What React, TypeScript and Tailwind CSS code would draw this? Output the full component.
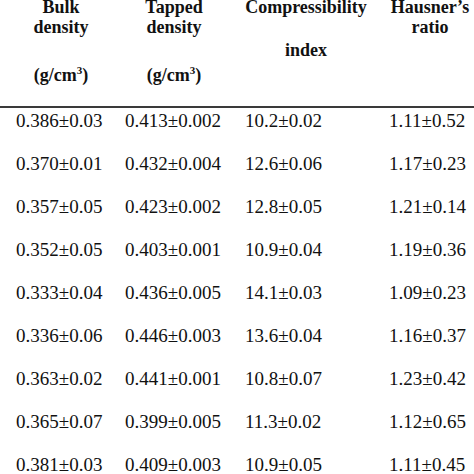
const rows: [string, string, string, string][] = [
  ['0.386±0.03', '0.413±0.002', '10.2±0.02', '1.11±0.52'],
  ['0.370±0.01', '0.432±0.004', '12.6±0.06', '1.17±0.23'],
  ['0.357±0.05', '0.423±0.002', '12.8±0.05', '1.21±0.14'],
  ['0.352±0.05', '0.403±0.001', '10.9±0.04', '1.19±0.36'],
  ['0.333±0.04', '0.436±0.005', '14.1±0.03', '1.09±0.23'],
  ['0.336±0.06', '0.446±0.003', '13.6±0.04', '1.16±0.37'],
  ['0.363±0.02', '0.441±0.001', '10.8±0.07', '1.23±0.42'],
  ['0.365±0.07', '0.399±0.005', '11.3±0.02', '1.12±0.65'],
  ['0.381±0.03', '0.409±0.003', '10.9±0.05', '1.11±0.45'],
];

function Unit() {
  return (
    <span>
      (g/cm<sup className="text-[11px] relative -top-[7px]">3</sup>)
    </span>
  );
}

export default function App() {
  return (
    <div
      className="w-[474px] h-[474px] overflow-hidden bg-white text-[#111]"
      style={{ fontFamily: '"Liberation Serif", "Times New Roman", serif' }}
    >
      {/* header */}
      <div className="flex h-[106px] text-[18px] font-bold">
        <div className="w-[120px] text-center pl-[2px]">
          <div className="leading-[14px]">Bulk</div>
          <div className="leading-[27px]">density</div>
          <div className="leading-[68px]">
            <Unit />
          </div>
        </div>
        <div className="w-[108px] text-center">
          <div className="leading-[14px]">Tapped</div>
          <div className="leading-[27px]">density</div>
          <div className="leading-[68px]">
            <Unit />
          </div>
        </div>
        <div className="w-[156px] text-center">
          <div className="leading-[14px]">Compressibility</div>
          <div className="leading-[72px]">index</div>
        </div>
        <div className="w-[90px] text-center pl-[2px]">
          <div className="leading-[14px] whitespace-nowrap">Hausner’s</div>
          <div className="leading-[27px]">ratio</div>
        </div>
      </div>
      <div className="h-[2px] bg-[#3a3a3a]" />

      {/* body */}
      <div className="text-[19px]">
        {rows.map((r, i) => (
          <div key={i} className="flex h-[43px] pt-[3px] leading-[19px] whitespace-nowrap">
            <div className="w-[120px] pl-[16px]">{r[0]}</div>
            <div className="w-[108px] pl-[5px]">{r[1]}</div>
            <div className="w-[156px] pl-[17px]">{r[2]}</div>
            <div className="w-[90px] pl-[5px]">{r[3]}</div>
          </div>
        ))}
      </div>
    </div>
  );
}
